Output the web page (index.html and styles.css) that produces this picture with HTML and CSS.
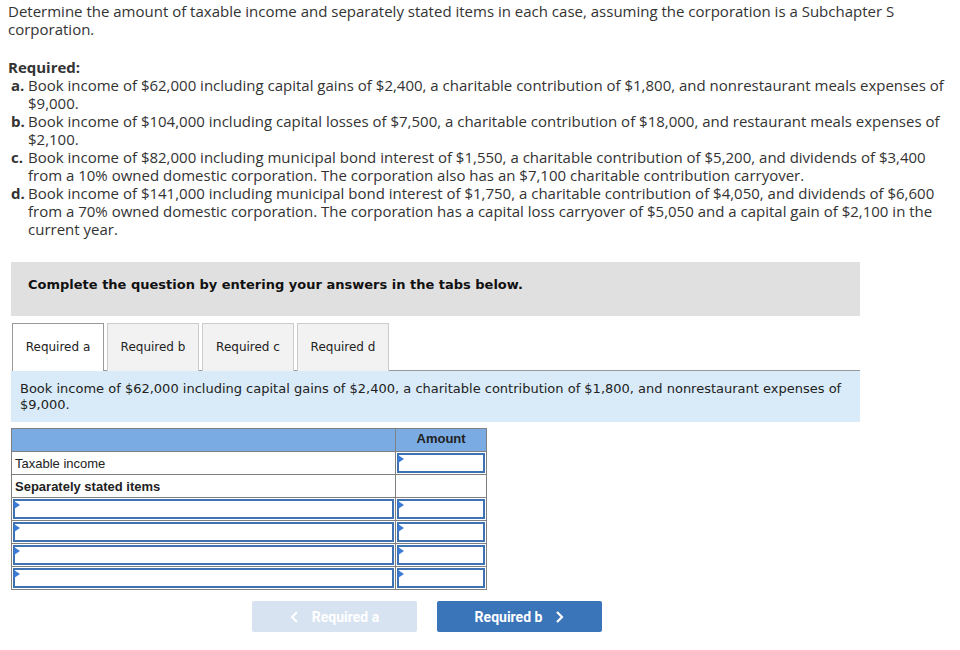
FILE: index.html
```html
<!DOCTYPE html>
<html>
<head>
<meta charset="utf-8">
<link rel="stylesheet" href="styles.css">
</head>
<body>
<div class="page">
  <p class="intro">Determine the amount of taxable income and separately stated items in each case, assuming the corporation is a Subchapter S corporation.</p>
  <p class="req-title">Required:</p>
  <div class="req-list">
    <div class="req-item"><span class="lbl">a.</span><span class="txt">Book income of $62,000 including capital gains of $2,400, a charitable contribution of $1,800, and nonrestaurant meals expenses of $9,000.</span></div>
    <div class="req-item"><span class="lbl">b.</span><span class="txt">Book income of $104,000 including capital losses of $7,500, a charitable contribution of $18,000, and restaurant meals expenses of $2,100.</span></div>
    <div class="req-item"><span class="lbl">c.</span><span class="txt">Book income of $82,000 including municipal bond interest of $1,550, a charitable contribution of $5,200, and dividends of $3,400 from a 10% owned domestic corporation. The corporation also has an $7,100 charitable contribution carryover.</span></div>
    <div class="req-item"><span class="lbl">d.</span><span class="txt">Book income of $141,000 including municipal bond interest of $1,750, a charitable contribution of $4,050, and dividends of $6,600 from a 70% owned domestic corporation. The corporation has a capital loss carryover of $5,050 and a capital gain of $2,100 in the current year.</span></div>
  </div>

  <div class="instructions">Complete the question by entering your answers in the tabs below.</div>

  <div class="tabs">
    <div class="tab active">Required a</div>
    <div class="tab">Required b</div>
    <div class="tab">Required c</div>
    <div class="tab">Required d</div>
  </div>
  <div class="prompt">Book income of $62,000 including capital gains of $2,400, a charitable contribution of $1,800, and nonrestaurant expenses of $9,000.</div>

  <table class="grid">
    <tr class="head"><th class="c1"></th><th class="c2">Amount</th></tr>
    <tr><td class="c1 label">Taxable income</td><td class="c2 inp"><div class="box"><span class="tri"></span></div></td></tr>
    <tr><td class="c1 label bold">Separately stated items</td><td class="c2"></td></tr>
    <tr><td class="c1 inp"><div class="box"><span class="tri"></span></div></td><td class="c2 inp"><div class="box"><span class="tri"></span></div></td></tr>
    <tr><td class="c1 inp"><div class="box"><span class="tri"></span></div></td><td class="c2 inp"><div class="box"><span class="tri"></span></div></td></tr>
    <tr><td class="c1 inp"><div class="box"><span class="tri"></span></div></td><td class="c2 inp"><div class="box"><span class="tri"></span></div></td></tr>
    <tr><td class="c1 inp"><div class="box"><span class="tri"></span></div></td><td class="c2 inp"><div class="box"><span class="tri"></span></div></td></tr>
  </table>

  <div class="nav">
    <button class="btn prev"><svg class="chev" width="10" height="14" viewBox="0 0 10 14"><polyline points="7,2 2,7 7,12" fill="none" stroke="#fff" stroke-width="2.2"/></svg><span>Required a</span></button>
    <button class="btn next"><span>Required b</span><svg class="chev" width="10" height="14" viewBox="0 0 10 14"><polyline points="3,2 8,7 3,12" fill="none" stroke="#fff" stroke-width="2.2"/></svg></button>
  </div>
</div>
</body>
</html>
```
FILE: styles.css
```css
* { box-sizing: border-box; }
html, body { margin: 0; padding: 0; background: #fff; }
.page {
  padding: 2px 12px 0 8px;
  font-family: "Open Sans", "Lato", sans-serif;
  font-size: 15px;
  line-height: 18px;
  color: #333;
}
.intro { margin: 0; }
.req-title { margin: 20px 0 0 0; font-weight: bold; }
.req-list { margin: 0; }
.req-item { display: flex; }
.req-item .lbl { width: 20px; flex: none; padding-left: 3px; font-weight: bold; }
.req-item .txt { flex: 1; }

.instructions {
  margin-top: 24px;
  margin-left: 3px;
  width: 849px;
  height: 54px;
  background: #e0e0e0;
  padding: 14px 0 0 17px;
  font-family: "DejaVu Sans", Verdana, sans-serif;
  font-size: 13px;
  font-weight: bold;
  color: #111;
}

.tabs {
  display: flex;
  gap: 3px;
  margin-top: 7px;
  margin-left: 4px;
  width: 848px;
  border-bottom: 1px solid #999;
  height: 48px;
}
.tab {
  width: 92px;
  height: 48px;
  background: #f2f2f2;
  border: 1px solid #ccc;
  border-bottom: none;
  font-family: "DejaVu Sans", Verdana, sans-serif;
  font-size: 12px;
  color: #222;
  display: flex;
  align-items: center;
  justify-content: center;
  padding-bottom: 2px;
}
.tab.active {
  background: #fff;
  border-color: #999;
  height: 48px;
  margin-bottom: -1px;
  position: relative;
  z-index: 1;
}
.prompt {
  margin-left: 3px;
  width: 849px;
  background: #d9ebf8;
  padding: 10px 9px 9px 9px;
  font-family: "DejaVu Sans", Verdana, sans-serif;
  font-size: 13px;
  line-height: 16px;
  color: #222;
}

.grid {
  margin-top: 6px;
  margin-left: 3px;
  border-collapse: collapse;
  width: 476px;
  font-family: "Liberation Sans", Arial, sans-serif;
  font-size: 13px;
  color: #222;
}
.grid td, .grid th {
  border: 1px solid #808080;
  height: 23px;
  padding: 0;
}
.grid tr { height: 23px; }
.grid .c1 { width: 385px; }
.grid .c2 { width: 91px; }
.grid .head th { background: #7aabe3; font-weight: bold; font-size: 13px; text-align: center; vertical-align: middle; padding-bottom: 2px; }
.grid td.label { padding: 1px 3px 0 3px; vertical-align: middle; line-height: 15px; }
.grid td.bold { font-weight: bold; }
.grid td.inp { padding: 1px; }
.box {
  position: relative;
  height: 20px;
  border: 2px solid #3e72b3;
  background: #fff;
}
.tri {
  position: absolute;
  left: -1px;
  top: 0;
  width: 0;
  height: 0;
  border-top: 4px solid transparent;
  border-bottom: 4px solid transparent;
  border-left: 6px solid #3a7bd5;
}

.nav {
  display: flex;
  gap: 20px;
  margin-top: 11px;
  margin-left: 244px;
}
.btn {
  width: 165px;
  height: 31px;
  border: none;
  border-radius: 2px;
  font-family: "Roboto", sans-serif;
  font-weight: bold;
  font-size: 14px;
  color: #fff;
  display: flex;
  align-items: center;
  justify-content: center;
  gap: 12px;
  padding: 0;
}
.btn.prev { background: #d7e3f1; }
.btn.next { background: #3a75ba; }
.chev { display: block; }
```
